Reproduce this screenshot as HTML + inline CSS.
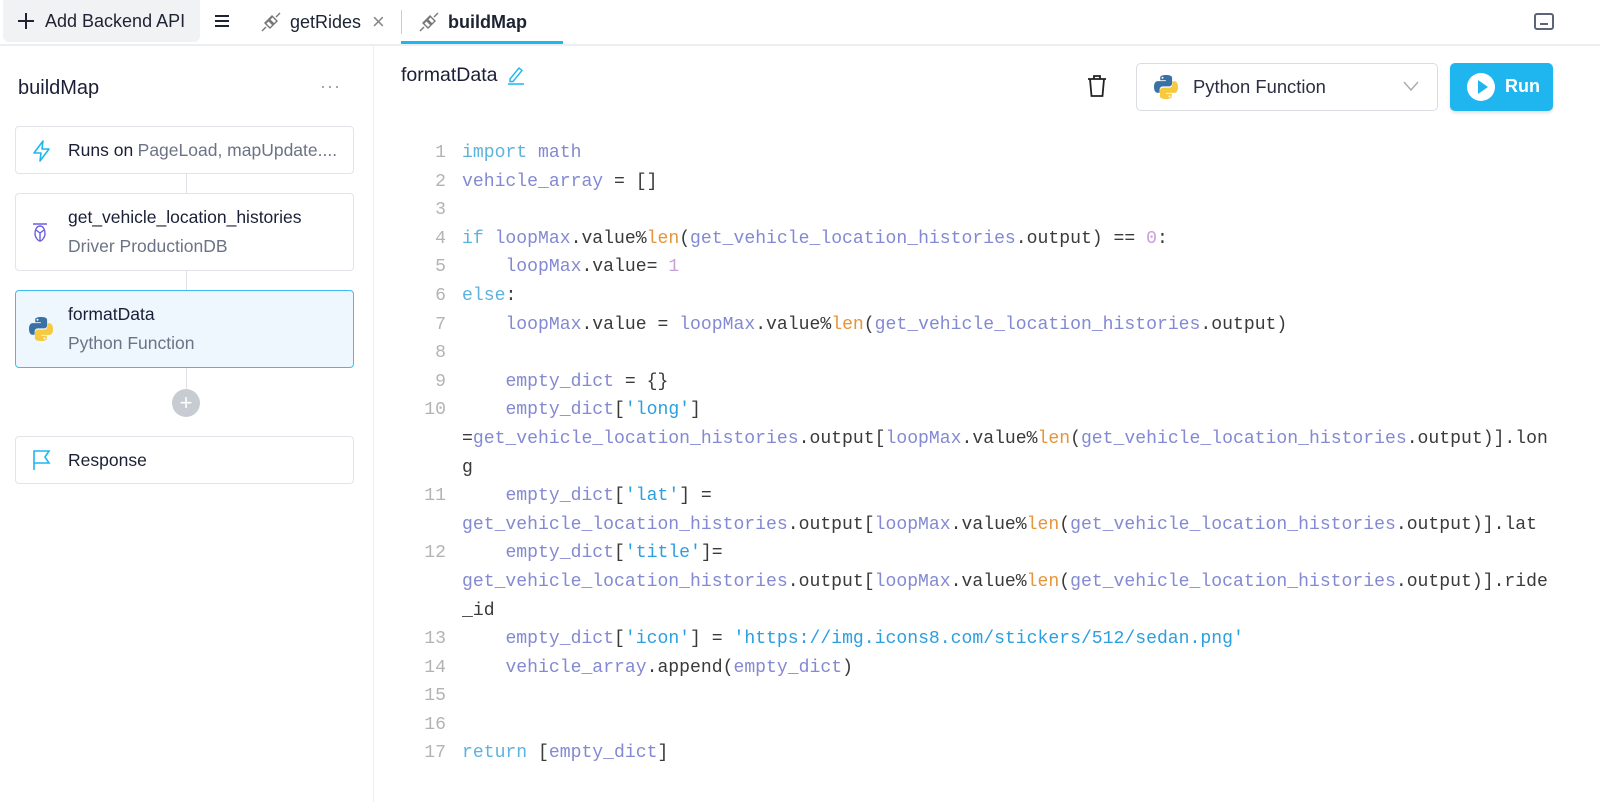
<!DOCTYPE html>
<html><head><meta charset="utf-8"><style>
*{box-sizing:border-box;margin:0;padding:0}
body{width:1600px;height:802px;background:#fff;font-family:"Liberation Sans",sans-serif;color:#1a1f36;position:relative;overflow:hidden}
.top{position:absolute;left:0;top:0;width:1600px;height:46px;border-bottom:2px solid #eceef2}
.add{position:absolute;left:3px;top:0;width:197px;height:42px;background:#f1f2f4;border-radius:0 0 6px 6px;font-size:18px;line-height:42px;padding-left:42px;color:#1d2333}
.add:before{content:"";position:absolute;left:15px;top:20px;width:16px;height:2px;background:#1d2333}
.add:after{content:"";position:absolute;left:22px;top:13px;width:2px;height:16px;background:#1d2333}
.tab{position:absolute;top:0;height:44px;line-height:44px;font-size:18px}
.left{position:absolute;left:0;top:46px;width:374px;height:756px;border-right:1px solid #eceef2}
.card{position:absolute;left:15px;width:339px;border:1px solid #e1e4e8;border-radius:4px;background:#fff}
.line{position:absolute;left:186px;width:1px;background:#dde0e4}
.t1{font-size:17.5px;color:#1a1f36}
.t2{font-size:17.5px;color:#6b7385}
pre{position:absolute;left:420px;top:139px;font-family:"Liberation Mono",monospace;font-size:18.1px;line-height:28.6px;color:#3a3a3a}
.g{display:inline-block;width:26px;text-align:right;color:#b3b3b3;margin-right:16px}
.k{color:#5cb3dd}.v{color:#8389d2}.f{color:#e6953a}.n{color:#c9a0d6}.s{color:#2b9fe0}
</style></head><body>
<div class="top">
 <div class="add">Add Backend API</div>
 <div style="position:absolute;left:215px;top:15px;width:14px;height:2px;background:#1d2333;box-shadow:0 5px 0 #1d2333,0 10px 0 #1d2333"></div>
 <svg style="position:absolute;left:260px;top:11px" width="22" height="22" viewBox="0 0 22 22" fill="none" stroke="#777" stroke-width="1.4"><path d="M2 20l4-4M20 2l-4 4M5 12l5 5 3-3-5-5zM9 8l5 5 3-3-5-5zM8 10l-2 2M12 6l-2 2"/></svg>
 <div class="tab" style="left:290px;color:#1d2333">getRides</div>
 <div class="tab" style="left:372px;color:#888;font-size:22px">×</div>
 <div style="position:absolute;left:401px;top:10px;width:1px;height:24px;background:#ccc"></div>
 <svg style="position:absolute;left:418px;top:11px" width="22" height="22" viewBox="0 0 22 22" fill="none" stroke="#777" stroke-width="1.4"><path d="M2 20l4-4M20 2l-4 4M5 12l5 5 3-3-5-5zM9 8l5 5 3-3-5-5zM8 10l-2 2M12 6l-2 2"/></svg>
 <div class="tab" style="left:448px;font-weight:bold;color:#1d2333">buildMap</div>
 <div style="position:absolute;left:401px;top:41px;width:162px;height:3px;background:#1fb6f0"></div>
 <div style="position:absolute;left:1534px;top:13px;width:20px;height:17px;border:2px solid #5d6478;border-radius:3px"><div style="position:absolute;left:4px;top:8px;width:8px;height:2px;background:#5d6478"></div></div>
</div>
<div class="left">
 <div style="position:absolute;left:18px;top:31px;font-size:20px;color:#1a1f36">buildMap</div>
 <div style="position:absolute;left:320px;top:30px;color:#999;font-size:18px;letter-spacing:1px">···</div>
 <div class="line" style="top:127px;height:20px"></div>
 <div class="line" style="top:224px;height:20px"></div>
 <div class="line" style="top:321px;height:22px"></div>
 <div class="card" style="top:80px;height:48px">
  <svg style="position:absolute;left:16px;top:13px" width="20" height="22" viewBox="0 0 20 22" fill="none" stroke="#1fb6f0" stroke-width="1.6" stroke-linejoin="round"><path d="M11 1L2 13h7l-1 8 9-12h-7z"/></svg>
  <div style="position:absolute;left:52px;top:13px"><span class="t1">Runs on</span> <span class="t2">PageLoad, mapUpdate....</span></div>
 </div>
 <div class="card" style="top:147px;height:78px">
  <svg style="position:absolute;left:16px;top:28px" width="16" height="22" viewBox="0 0 16 22" fill="none" stroke="#6a5fe0" stroke-width="1.4"><path d="M1 2h14M8 4c-4 0-5 5-5 8s3 7 5 7 5-4 5-7-1-8-5-8zM8 10v9M4 8l4 3 4-3"/></svg>
  <div class="t1" style="position:absolute;left:52px;top:13px">get_vehicle_location_histories</div>
  <div class="t2" style="position:absolute;left:52px;top:42px">Driver ProductionDB</div>
 </div>
 <div class="card" style="top:244px;height:78px;background:#eef7fd;border-color:#3dbdf2">
  <svg style="position:absolute;left:12px;top:25px" width="26" height="26" viewBox="0 0 26 26"><path d="M12.8 1c-6 0-5.6 2.6-5.6 2.6v2.7h5.7v.8H5S1 6.6 1 12.8s3.5 6 3.5 6h2.1v-2.9s-.1-3.5 3.4-3.5h5.8s3.3.1 3.3-3.2V3.8S19.6 1 12.8 1z" fill="#3a71a4"/><path d="M13.2 25c6 0 5.6-2.6 5.6-2.6v-2.7h-5.7v-.8H21s4 .5 4-5.7-3.5-6-3.5-6h-2.1v2.9s.1 3.5-3.4 3.5H10.2s-3.3-.1-3.3 3.2v5.4S6.4 25 13.2 25z" fill="#f7c93e"/><circle cx="9.5" cy="3.8" r="1" fill="#fff"/><circle cx="16.5" cy="22.2" r="1" fill="#fff"/></svg>
  <div class="t1" style="position:absolute;left:52px;top:13px">formatData</div>
  <div class="t2" style="position:absolute;left:52px;top:42px">Python Function</div>
 </div>
 <div style="position:absolute;left:172px;top:343px;width:28px;height:28px;border-radius:50%;background:#c7cbd2;color:#fff;text-align:center;line-height:27px;font-size:22px">+</div>
 <div class="card" style="top:390px;height:48px">
  <svg style="position:absolute;left:16px;top:12px" width="20" height="22" viewBox="0 0 20 22" fill="none" stroke="#1fb6f0" stroke-width="1.6"><path d="M2 21V2h15l-4 6 4 6H2"/></svg>
  <div class="t1" style="position:absolute;left:52px;top:13px">Response</div>
 </div>
</div>
<div style="position:absolute;left:401px;top:64px;font-size:19.5px;color:#1a1f36">formatData</div>
<svg style="position:absolute;left:507px;top:65px" width="18" height="20" viewBox="0 0 18 20" fill="none" stroke="#1fb6f0" stroke-width="1.4"><path d="M3 14l9-11 3 2.5-9 11H3zM1 19h16"/></svg>
<svg style="position:absolute;left:1086px;top:74px" width="22" height="24" viewBox="0 0 22 24" fill="none" stroke="#222" stroke-width="1.8"><path d="M2 5h18M8 5V2h6v3M4 5l1.5 17h11L18 5"/></svg>
<div style="position:absolute;left:1136px;top:63px;width:302px;height:48px;border:1px solid #d9dce1;border-radius:5px">
 <svg style="position:absolute;left:16px;top:10px" width="26" height="26" viewBox="0 0 26 26"><path d="M12.8 1c-6 0-5.6 2.6-5.6 2.6v2.7h5.7v.8H5S1 6.6 1 12.8s3.5 6 3.5 6h2.1v-2.9s-.1-3.5 3.4-3.5h5.8s3.3.1 3.3-3.2V3.8S19.6 1 12.8 1z" fill="#3a71a4"/><path d="M13.2 25c6 0 5.6-2.6 5.6-2.6v-2.7h-5.7v-.8H21s4 .5 4-5.7-3.5-6-3.5-6h-2.1v2.9s.1 3.5-3.4 3.5H10.2s-3.3-.1-3.3 3.2v5.4S6.4 25 13.2 25z" fill="#f7c93e"/><circle cx="9.5" cy="3.8" r="1" fill="#fff"/><circle cx="16.5" cy="22.2" r="1" fill="#fff"/></svg>
 <div style="position:absolute;left:56px;top:12px;font-size:18.4px;color:#2a3042">Python Function</div>
 <svg style="position:absolute;left:266px;top:17px" width="16" height="10" viewBox="0 0 16 10" fill="none" stroke="#aaa" stroke-width="1.4"><path d="M1 1l7 8 7-8"/></svg>
</div>
<div style="position:absolute;left:1450px;top:63px;width:103px;height:48px;background:#1fb6f0;border-radius:5px;box-shadow:0 2px 3px rgba(0,0,0,.12)">
 <div style="position:absolute;left:17px;top:10px;width:28px;height:28px;border-radius:50%;background:#fff"></div>
 <div style="position:absolute;left:28px;top:17px;width:0;height:0;border-left:10px solid #1fb6f0;border-top:7px solid transparent;border-bottom:7px solid transparent"></div>
 <div style="position:absolute;left:55px;top:13px;font-size:18px;color:#fff;font-weight:bold">Run</div>
</div>
<pre><span class="g">1</span><span class="k">import</span> <span class="v">math</span>
<span class="g">2</span><span class="v">vehicle_array</span> = []
<span class="g">3</span>
<span class="g">4</span><span class="k">if</span> <span class="v">loopMax</span>.value%<span class="f">len</span>(<span class="v">get_vehicle_location_histories</span>.output) == <span class="n">0</span>:
<span class="g">5</span>    <span class="v">loopMax</span>.value= <span class="n">1</span>
<span class="g">6</span><span class="k">else</span>:
<span class="g">7</span>    <span class="v">loopMax</span>.value = <span class="v">loopMax</span>.value%<span class="f">len</span>(<span class="v">get_vehicle_location_histories</span>.output)
<span class="g">8</span>
<span class="g">9</span>    <span class="v">empty_dict</span> = {}
<span class="g">10</span>    <span class="v">empty_dict</span>[<span class="s">'long'</span>]
<span class="g"></span>=<span class="v">get_vehicle_location_histories</span>.output[<span class="v">loopMax</span>.value%<span class="f">len</span>(<span class="v">get_vehicle_location_histories</span>.output)].lon
<span class="g"></span>g
<span class="g">11</span>    <span class="v">empty_dict</span>[<span class="s">'lat'</span>] =
<span class="g"></span><span class="v">get_vehicle_location_histories</span>.output[<span class="v">loopMax</span>.value%<span class="f">len</span>(<span class="v">get_vehicle_location_histories</span>.output)].lat
<span class="g">12</span>    <span class="v">empty_dict</span>[<span class="s">'title'</span>]=
<span class="g"></span><span class="v">get_vehicle_location_histories</span>.output[<span class="v">loopMax</span>.value%<span class="f">len</span>(<span class="v">get_vehicle_location_histories</span>.output)].ride
<span class="g"></span>_id
<span class="g">13</span>    <span class="v">empty_dict</span>[<span class="s">'icon'</span>] = <span class="s">'https://img.icons8.com/stickers/512/sedan.png'</span>
<span class="g">14</span>    <span class="v">vehicle_array</span>.append(<span class="v">empty_dict</span>)
<span class="g">15</span>
<span class="g">16</span>
<span class="g">17</span><span class="k">return</span> [<span class="v">empty_dict</span>]</pre>
</body></html>
